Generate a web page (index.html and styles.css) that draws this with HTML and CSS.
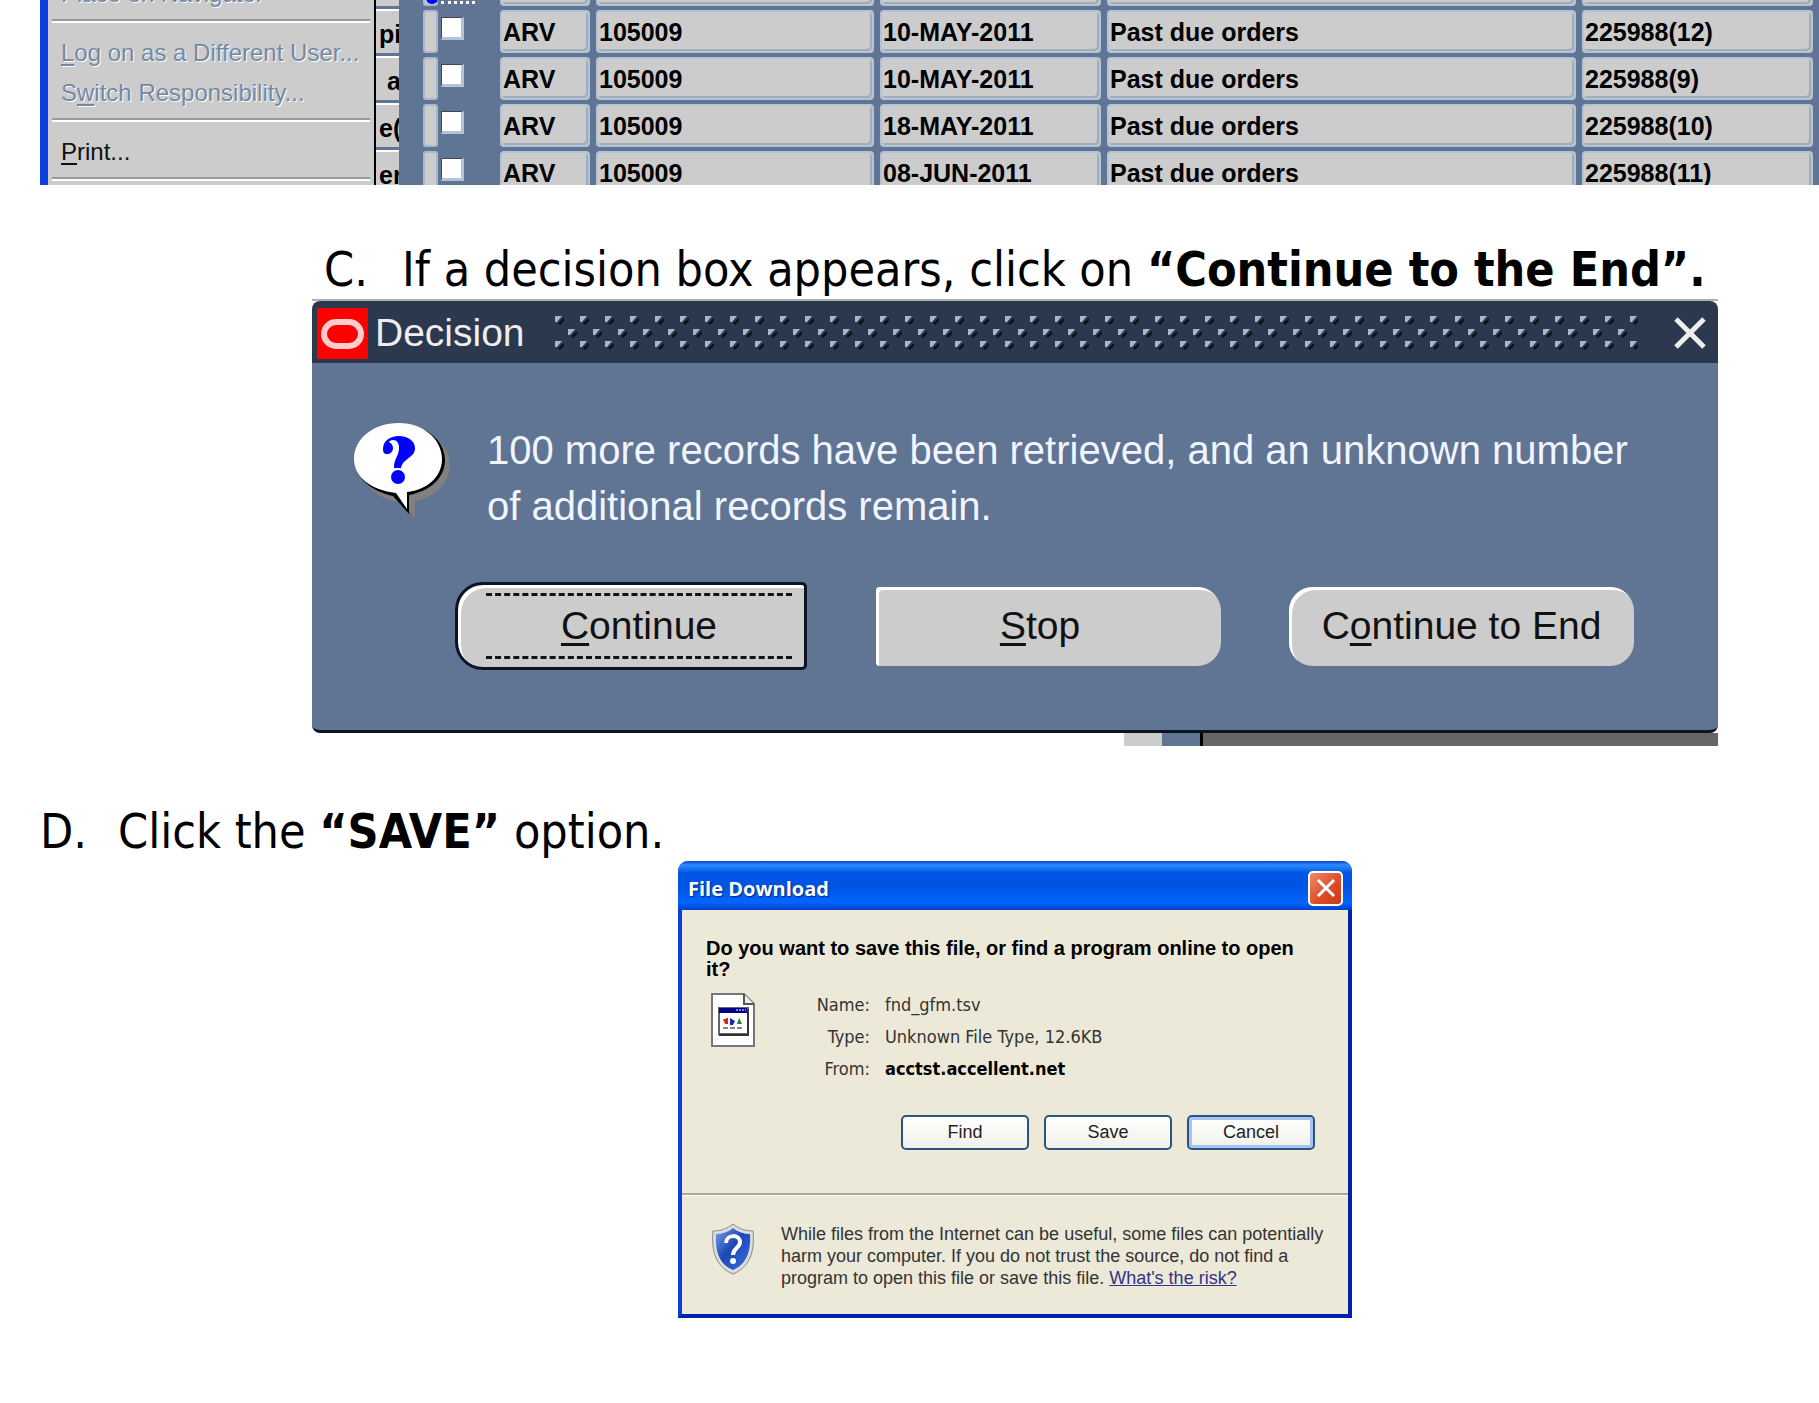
FILE: index.html
```html
<!DOCTYPE html>
<html lang="en">
<head>
  <meta charset="UTF-8" />
  <title>Export Instructions</title>
  <link rel="stylesheet" href="styles.css">
</head>
<body>
  <!-- records form with the File menu open -->
  <section class="forms">
    <div class="menu">
      <button class="menu-item" disabled>Place on Navigator</button>
      <hr>
      <button class="menu-item" disabled><u>L</u>og on as a Different User...</button>
      <button class="menu-item" disabled>S<u>w</u>itch Responsibility...</button>
      <hr>
      <button class="menu-item"><u>P</u>rint...</button>
      <hr>
    </div>
    <div class="behind">
      <div></div>
      <div>pi</div>
      <div class="right">a</div>
      <div>e(</div>
      <div>er</div>
    </div>
    <div class="records">
      <table>
        <colgroup>
          <col class="col-check"><col class="col-org"><col class="col-num"><col class="col-date"><col class="col-reason"><col>
        </colgroup>
        <tbody>
          <tr>
            <td class="pick"><div><i></i><span class="dot"></span><span class="dash"></span></div></td>
            <td></td><td></td><td></td><td></td><td></td>
          </tr>
          <tr>
            <td class="pick"><div><i></i><input type="checkbox" aria-label="Select 225988(12)"></div></td>
            <td>ARV</td><td>105009</td><td>10-MAY-2011</td><td>Past due orders</td><td>225988(12)</td>
          </tr>
          <tr>
            <td class="pick"><div><i></i><input type="checkbox" aria-label="Select 225988(9)"></div></td>
            <td>ARV</td><td>105009</td><td>10-MAY-2011</td><td>Past due orders</td><td>225988(9)</td>
          </tr>
          <tr>
            <td class="pick"><div><i></i><input type="checkbox" aria-label="Select 225988(10)"></div></td>
            <td>ARV</td><td>105009</td><td>18-MAY-2011</td><td>Past due orders</td><td>225988(10)</td>
          </tr>
          <tr>
            <td class="pick"><div><i></i><input type="checkbox" aria-label="Select 225988(11)"></div></td>
            <td>ARV</td><td>105009</td><td>08-JUN-2011</td><td>Past due orders</td><td>225988(11)</td>
          </tr>
        </tbody>
      </table>
    </div>
  </section>

  <p class="step step-c"><span class="letter">C.</span><span>If a decision box appears, click on <b>“Continue to the End”.</b></span></p>

  <section class="decision">
    <header class="decision-title">
      <svg class="oracle" width="51" height="51" viewBox="0 0 51 51">
        <rect width="51" height="51" fill="#f00"/>
        <rect x="7" y="14" width="37" height="24" rx="12" fill="none" stroke="#fcc" stroke-width="6"/>
      </svg>
      <span>Decision</span>
      <svg class="grip" height="38">
        <defs>
          <pattern id="dots" width="25" height="38" patternUnits="userSpaceOnUse">
            <g fill="#0a1018"><path d="M3 9l6-5v3l-4 4zM3 34l6-5v3l-4 4zM16 22l6-5v3l-4 4z"/></g>
            <g fill="#a9b5c8"><path d="M0 2h7l-5 6h-2zM0 27h7l-5 6h-2zM13 15h7l-5 6h-2z"/></g>
          </pattern>
        </defs>
        <rect width="100%" height="38" fill="url(#dots)"/>
      </svg>
      <button class="decision-close" aria-label="Close">
        <svg width="32" height="32" viewBox="0 0 32 32"><path d="M2 2L30 30M30 2L2 30" stroke="#eee" stroke-width="5"/></svg>
      </button>
    </header>
    <div class="decision-body">
      <div class="message">
        <svg width="98" height="100" viewBox="0 0 98 100">
          <g fill="#808080" transform="translate(6 5)"><ellipse cx="46" cy="38" rx="45" ry="37"/><path d="M42 70L56 92V70z"/></g>
          <path d="M46 2C21 2 2 17 2 38c0 17 15 31 38 36l16 18V73c21-4 36-17 36-35C92 17 71 2 46 2z" fill="#000"/>
          <path d="M46 1C20 1 1 17 1 37c0 18 17 31 42 34l11 16V70c20-2 35-15 35-33C89 17 70 1 46 1z" fill="#fff"/>
          <path d="M30 27c0-8 7-13 16-13s16 5 16 12c0 10-12 10-14 20h-7c0-10 5-12 5-20 0-5-2-8-6-8-2 0-4 1-4 2 2 1 4 3 4 6 0 4-3 6-6 6s-4-2-4-5z" fill="#00f"/>
          <circle cx="45" cy="55" r="7" fill="#00f"/>
        </svg>
        <p>100 more records have been retrieved, and an unknown number<br>of additional records remain.</p>
      </div>
      <div class="decision-buttons">
        <button class="first"><span><u>C</u>ontinue</span></button>
        <button class="middle"><u>S</u>top</button>
        <button class="last">C<u>o</u>ntinue to End</button>
      </div>
    </div>
    <div class="underlay"><i></i><i></i><i></i></div>
  </section>

  <p class="step step-d"><span class="letter">D.</span><span>Click the <b>“SAVE”</b> option.</span></p>

  <div class="download-row">
    <section class="download">
      <header class="download-title">
        <span>File Download</span>
        <button aria-label="Close"><svg width="20" height="20" viewBox="0 0 20 20"><path d="M2 2L18 18M18 2L2 18" stroke="#fff" stroke-width="3"/></svg></button>
      </header>
      <div class="download-main">
        <h2>Do you want to save this file, or find a program online to open it?</h2>
        <div class="file">
          <svg width="44" height="54" viewBox="0 0 44 54">
            <path d="M1 1h32l10 10v42H1z" fill="#fff" stroke="#777" stroke-width="2"/>
            <path d="M33 1v10h10" fill="#eee" stroke="#555" stroke-width="2"/>
            <rect x="8" y="15" width="29" height="26" fill="#fff" stroke="#666" stroke-width="2"/>
            <path d="M8 15h28v5H8z" fill="#008"/><path d="M25 17h10" stroke="#fff" stroke-dasharray="2 1"/>
            <path d="M12 26h5v5h-3zM15 25h2v6h-2z" fill="#d22"/><path d="M19 25l5 3-2 4h-3z" fill="#22c"/><path d="M26 31l2-6 3 6z" fill="#183"/>
            <path d="M12 35h19" stroke="#888" stroke-width="2" stroke-dasharray="5 2"/><path d="M37 16v26H8" stroke="#333" stroke-width="2" fill="none"/>
          </svg>
          <dl>
            <dt>Name:</dt><dd>fnd_gfm.tsv</dd>
            <dt>Type:</dt><dd>Unknown File Type, 12.6KB</dd>
            <dt>From:</dt><dd class="from">acctst.accellent.net</dd>
          </dl>
        </div>
        <div class="download-buttons">
          <button>Find</button>
          <button>Save</button>
          <button class="default">Cancel</button>
        </div>
      </div>
      <footer class="download-foot">
        <svg width="44" height="52" viewBox="0 0 44 52">
          <defs><linearGradient id="shield" x1="0" y1="0" x2="1" y2="1"><stop offset="0" stop-color="#7aa0e8"/><stop offset=".45" stop-color="#1c48b8"/><stop offset="1" stop-color="#3c70dc"/></linearGradient></defs>
          <path d="M22 1c6 5 13 7 20 7 2 20-3 36-20 43C5 44 0 28 2 8c7 0 14-2 20-7z" fill="#ddd" stroke="#888"/>
          <path d="M22 5c5 4 11 6 17 6 1 17-3 30-17 36C8 41 4 28 5 11c6 0 12-2 17-6z" fill="url(#shield)"/>
          <path d="M15 20c0-9 14-9 14-1 0 6-7 6-7 13" fill="none" stroke="#fff" stroke-width="4"/><circle cx="22" cy="38" r="3" fill="#fff"/>
        </svg>
        <p>While files from the Internet can be useful, some files can potentially harm your computer. If you do not trust the source, do not find a program to open this file or save this file. <a href="#">What's the risk?</a></p>
      </footer>
    </section>
  </div>
</body>
</html>
```
FILE: styles.css
```css
* {
  box-sizing: border-box;
}
body {
  margin: 0;
  background-color: #fff;
  color: #000;
  font-family: "Liberation Sans", Arial, sans-serif;
}
button {
  font-family: inherit;
  cursor: pointer;
}
svg {
  display: block;
  flex-shrink: 0;
}
p, h2, dl, dd {
  margin: 0;
}

/* forms window */
.forms {
  display: flex;
  height: 185px;
  margin-left: 40px;
  overflow: hidden;
  background-color: #607493;
}
.menu {
  width: 336px;
  flex-shrink: 0;
  padding: 0 4px;
  border-left: 8px solid #0a3fe0;
  border-right: 2px solid #000;
  background-color: #ccc;
}
.menu-item {
  display: block;
  width: 100%;
  height: 40px;
  padding: 0 9px;
  border: 0;
  background: none;
  color: #111;
  font-size: 24px;
  line-height: 40px;
  text-align: left;
  white-space: nowrap;
}
.menu-item:first-child {
  margin-top: -26px;
}
.menu-item:disabled {
  color: #7488a6;
  text-shadow: 1px 1px #fff;
}
.menu hr {
  margin: 5px 0 10px;
  border: 0;
  border-top: 2px solid #999;
  border-bottom: 2px solid #fff;
}
.menu u {
  text-underline-offset: 3px;
}
.behind {
  width: 23px;
  flex-shrink: 0;
  margin-top: -38px;
  background-color: #ccc;
  font-size: 25px;
  font-weight: bold;
  line-height: 46px;
  overflow: hidden;
}
.behind div {
  height: 47px;
  padding-left: 3px;
  border-top: 2px solid #fff;
  border-bottom: 3px solid #607493;
}
.behind .right {
  padding-left: 11px;
}
.records {
  flex: 1;
  padding-left: 18px;
}
.records table {
  width: 100%;
  margin-top: -41px;
  table-layout: fixed;
  border-collapse: separate;
  border-spacing: 6px 4px;
}
.col-check { width: 71px; }
.col-org { width: 90px; }
.col-num { width: 278px; }
.col-date { width: 221px; }
.col-reason { width: 469px; }
.records td {
  height: 43px;
  padding: 0 1px;
  border: 2px solid #b4c3d6;
  border-radius: 4px;
  box-shadow: inset -2px -2px #a3adba;
  background-color: #ccc;
  font-size: 25px;
  font-weight: bold;
  line-height: 38px;
  white-space: nowrap;
}
.records .pick {
  padding: 0;
  border: 0;
  box-shadow: none;
  background: none;
}
.pick div {
  display: flex;
  gap: 3px;
  height: 43px;
}
.pick i {
  width: 15px;
  border: 2px solid #a9b8cc;
  border-radius: 3px;
  background-color: #ccc;
}
.pick input {
  appearance: none;
  width: 23px;
  height: 23px;
  margin: 7px 0 0;
  border: 1px solid #445;
  border-right: 3px solid #b4c3d6;
  border-bottom: 3px solid #b4c3d6;
  background-color: #fff;
}
.pick .dot {
  width: 12px;
  height: 12px;
  margin: 29px 0 0 -15px;
  border-radius: 50%;
  background-color: #00f;
}
.pick .dash {
  width: 34px;
  height: 41px;
  border-bottom: 3px dotted #fff;
}

/* numbered steps */
.step {
  display: flex;
  font-family: "DejaVu Sans Condensed", "DejaVu Sans", sans-serif;
  font-size: 48px;
  line-height: 58px;
  white-space: nowrap;
}
.letter {
  width: 78px;
}
.step-c {
  margin: 55px 0 0 324px;
}
.step-d {
  margin: 56px 0 0 40px;
}

/* decision box */
.decision {
  margin: 1px 101px 0 312px;
  border-top: 2px solid #a8b4b4;
}
.decision-title {
  display: flex;
  align-items: center;
  height: 62px;
  padding: 2px 12px 0 5px;
  border-radius: 8px 8px 0 0;
  background-color: #2b384d;
  color: #eee;
  font-size: 39px;
}
.oracle {
  margin-right: 7px;
}
.grip {
  flex: 1;
  margin: 0 36px 0 30px;
}
.decision-close {
  padding: 0;
  border: 0;
  background: none;
}
.decision-body {
  height: 370px;
  padding: 59px 84px 0 41px;
  border-bottom: 3px solid #0b1422;
  border-radius: 0 0 8px 8px;
  background-color: #607493;
}
.message {
  display: flex;
  gap: 36px;
  color: #f0f5ff;
  font-size: 40px;
  line-height: 56px;
  white-space: nowrap;
}
.decision-buttons {
  display: flex;
  justify-content: space-between;
  align-items: center;
  height: 88px;
  margin: 48px 0 0 102px;
}
.decision-buttons button {
  width: 345px;
  height: 79px;
  padding: 0;
  border: 0;
  box-shadow: inset 3px 3px #fff;
  background-color: #ccc;
  color: #111;
  font-size: 39px;
}
.decision-buttons u {
  text-decoration-thickness: 3px;
  text-underline-offset: 4px;
}
.decision-buttons .first {
  width: 352px;
  height: 88px;
  padding: 8px 12px 8px 28px;
  border: 3px solid #0b1422;
  border-radius: 28px 5px 5px 28px;
}
.first span {
  display: block;
  padding: 8px 0;
  border-top: 3px dashed #111;
  border-bottom: 3px dashed #111;
}
.decision-buttons .middle {
  padding-right: 16px;
  border-radius: 4px 24px 24px 4px;
}
.decision-buttons .last {
  border-radius: 24px;
}
.underlay {
  display: flex;
  justify-content: flex-end;
  height: 13px;
}
.underlay i {
  width: 38px;
  background-color: #ccc;
}
.underlay i:nth-child(2) {
  background-color: #607493;
}
.underlay i:nth-child(3) {
  width: 518px;
  border-left: 3px solid #000;
  background-color: #666;
}

/* file download box */
.download-row {
  margin: 1px 101px 0 312px;
}
.download {
  max-width: 674px;
  margin: 0 auto;
  border: 4px solid #0a3fd8;
  border-top: 0;
  border-right-color: #0020b0;
  border-bottom-color: #0020b0;
  border-radius: 10px 10px 0 0;
  background-color: #ece9d8;
  font-size: 18px;
}
.download-title {
  display: flex;
  align-items: center;
  justify-content: space-between;
  height: 49px;
  margin: 0 -4px;
  padding: 5px 9px 0 10px;
  border-radius: 10px 10px 0 0;
  background: linear-gradient(#0843c8, #2a8cff 8%, #0054e3 25%, #0054e3 55%, #0066ff 85%, #0040c8);
  color: #fff;
  font-family: "Open Sans", "Noto Sans", sans-serif;
  font-size: 20px;
  font-weight: bold;
  text-shadow: 1px 1px 1px #00268f;
}
.download-title button {
  display: flex;
  align-items: center;
  justify-content: center;
  width: 35px;
  height: 35px;
  padding: 0;
  border: 2px solid #fff;
  border-radius: 5px;
  background: linear-gradient(135deg, #ee8a6c, #dc4a24 60%, #c83c14);
}
.download-main {
  padding: 28px 33px 43px 24px;
  border-bottom: 2px solid #aca899;
}
.download h2 {
  font-size: 20px;
  line-height: 21px;
}
.file {
  display: flex;
  gap: 59px;
  margin: 13px 0 0 5px;
}
.file dl {
  display: grid;
  grid-template-columns: 56px auto;
  column-gap: 15px;
  color: #333;
  font-family: "DejaVu Sans Condensed", "DejaVu Sans", sans-serif;
  font-size: 18px;
  line-height: 32px;
  margin-top: -4px;
}
.file dt {
  text-align: right;
}
.file .from {
  color: #000;
  font-weight: bold;
}
.download-buttons {
  display: flex;
  justify-content: flex-end;
  gap: 15px;
  margin-top: 30px;
}
.download-buttons button {
  width: 128px;
  height: 35px;
  padding: 0;
  border: 2px solid #2a5580;
  border-radius: 5px;
  background: linear-gradient(#fff, #f0f0ea);
  color: #222;
  font-size: 18px;
}
.download-buttons .default {
  box-shadow: inset 0 0 0 3px #a9c3f5;
}
.download-foot {
  display: flex;
  gap: 26px;
  padding: 27px 16px 25px 29px;
  border-top: 1px solid #fff;
  color: #333;
  line-height: 22px;
}
.download-foot a {
  color: #338;
}
```
